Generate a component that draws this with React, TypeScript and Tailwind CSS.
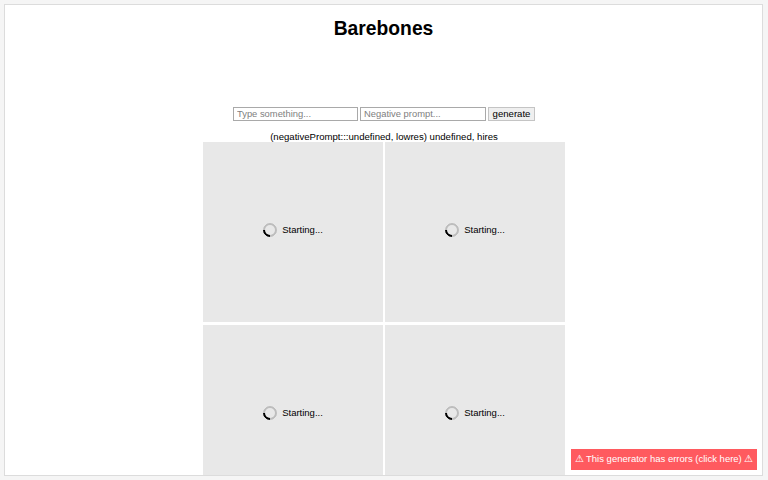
const tiles = [0, 1, 2, 3]

function Spinner() {
  return (
    <div className="box-border h-[14px] w-[14px] -rotate-45 rounded-full border-[2.5px] border-[#bdbdbd] border-l-black" />
  )
}

export default function App() {
  return (
    <div className="h-[480px] w-[768px] overflow-hidden bg-[#f5f5f5] pl-[4px] pr-[5px] pt-[4px] pb-1 font-['Liberation_Sans',Arial,sans-serif] text-black">
      <div className="relative h-[472px] overflow-hidden border border-[#dcdcdc] bg-white">
        <h1 className="pt-[12px] text-center text-[19.3px] font-bold leading-[24px]">Barebones</h1>

        <div className="mt-[66px] flex justify-center gap-[2px] pl-[1px] text-[9.6px] leading-[13px]">
          <input
            placeholder="Type something..."
            className="h-[14px] w-[125px] border border-[#a9a9a9] px-[3px] pb-[1px] text-[9.4px] placeholder:text-[#808080]"
          />
          <input
            placeholder="Negative prompt..."
            className="h-[14px] w-[126px] border border-[#a9a9a9] px-[3px] pb-[1px] text-[9.4px] placeholder:text-[#808080]"
          />
          <button className="h-[14px] w-[47px] border border-[#c4c4c4] bg-[#efefef] text-[9.6px] leading-[12px]">generate</button>
        </div>

        <div className="mt-[9px] h-[12px] pl-[1px] text-center text-[9.6px] leading-[13px]">
          (negativePrompt:::undefined, lowres) undefined, hires
        </div>

        <div className="ml-[198px] grid w-[362px] grid-cols-[180px_180px] gap-[3px_2px]">
          {tiles.map((t) => (
            <div key={t} className="flex h-[180px] items-center justify-center gap-[5px] bg-[#e8e8e8] pb-[4px] text-[9.5px]">
              <Spinner />
              <span>Starting...</span>
            </div>
          ))}
        </div>

        <div className="absolute bottom-[5px] right-[5px] flex h-[21px] w-[186px] items-center justify-center whitespace-nowrap bg-[#ff5a5f] text-[9.5px] text-white">
          ⚠ This generator has errors (click here) ⚠
        </div>
      </div>
    </div>
  )
}
